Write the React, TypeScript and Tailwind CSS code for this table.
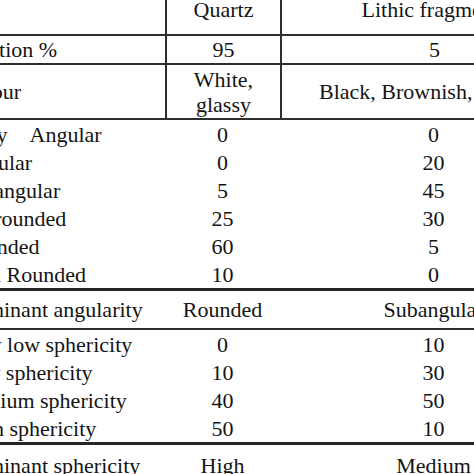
import React from "react";

const roundness: [string, string, string][] = [
  ["Very\u2003Angular", "0", "0"],
  ["Angular", "0", "20"],
  ["Subangular", "5", "45"],
  ["Subrounded", "25", "30"],
  ["Rounded", "60", "5"],
  ["Well Rounded", "10", "0"],
];

const sphericity: [string, string, string][] = [
  ["Very low sphericity", "0", "10"],
  ["Low sphericity", "10", "30"],
  ["Medium sphericity", "40", "50"],
  ["High sphericity", "50", "10"],
];

interface RowProps {
  label: React.ReactNode;
  quartz: React.ReactNode;
  lithic: React.ReactNode;
  className?: string;
  labelClass?: string;
  divided?: boolean;
}

const Row: React.FC<RowProps> = ({ label, quartz, lithic, className = "h-[28px]", labelClass = "", divided }) => (
  <div className={`flex ${className}`}>
    <div className={`w-[205px] flex items-center whitespace-nowrap ${labelClass}`}>{label}</div>
    <div
      className={`w-[115px] flex items-center justify-center text-center ${
        divided ? "border-l-2 border-[#2e2e2e]" : ""
      }`}
    >
      {quartz}
    </div>
    <div
      className={`w-[307px] flex items-center justify-center text-center whitespace-nowrap ${
        divided ? "border-l-2 border-[#2e2e2e]" : ""
      }`}
    >
      {lithic}
    </div>
  </div>
);

export default function App() {
  return (
    <div className="w-[474px] h-[474px] overflow-hidden bg-white text-[#141414] font-['Liberation_Serif',serif] text-[22px] leading-[25px]">
      <div className="w-[627px] -ml-[40px]">
        {/* header */}
        <div className="flex h-[36px] border-b-2 border-[#2e2e2e]">
          <div className="w-[205px]" />
          <div className="w-[115px] border-l-2 border-[#2e2e2e] flex items-end justify-center pb-[12px]">Quartz</div>
          <div className="w-[307px] border-l-2 border-[#2e2e2e] flex items-end justify-center pb-[12px] whitespace-nowrap">
            Lithic fragments
          </div>
        </div>

        <Row label="Fraction %" quartz="95" lithic="5" divided className="h-[29px] border-b-2 border-[#2e2e2e]" />
        <Row
          label="Colour"
          quartz={
            <span>
              White,
              <br />
              glassy
            </span>
          }
          lithic="Black, Brownish, Reddish"
          divided
          className="h-[55px] border-b-2 border-[#2e2e2e]"
        />

        <div className="border-b-[3px] border-[#262626]">
          {roundness.map(([label, q, l], i) => (
            <Row key={label} label={label} quartz={q} lithic={l} labelClass={i === 0 ? "pl-[6px]" : ""} />
          ))}
        </div>

        <Row
          label="Dominant angularity"
          quartz="Rounded"
          lithic="Subangular"
          className="h-[39px] border-b-2 border-[#2e2e2e]"
        />

        <div className="border-b-[3px] border-[#262626]">
          {sphericity.map(([label, q, l]) => (
            <Row key={label} label={label} quartz={q} lithic={l} />
          ))}
        </div>

        <Row label="Dominant sphericity" quartz="High" lithic="Medium" className="h-[40px]" />
      </div>
    </div>
  );
}
